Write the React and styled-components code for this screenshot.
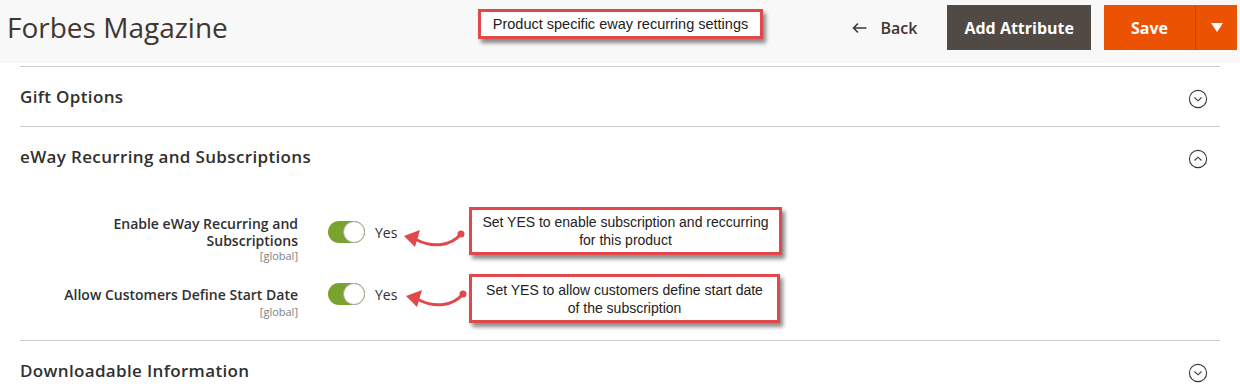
import React from 'react';
import styled, { createGlobalStyle } from 'styled-components';

const GlobalStyle = createGlobalStyle`
  html, body {
    margin: 0;
    padding: 0;
    background: #fff;
  }
  body {
    font-family: "Open Sans", "Liberation Sans", sans-serif;
    color: #303030;
    overflow: hidden;
  }
`;

const Page = styled.div`
  position: relative;
  width: 1240px;
  height: 389px;
  overflow: hidden;
`;

const Header = styled.header`
  display: flex;
  align-items: flex-start;
  height: 63px;
  background: #f8f8f8;
  padding: 5px 3px 0 7px;
  box-sizing: border-box;
`;

const Title = styled.h1`
  margin: 0;
  padding-top: 4px;
  font-size: 28px;
  font-weight: 400;
  color: #41362f;
  line-height: 36px;
  flex: 1;
`;

const Actions = styled.div`
  display: flex;
  align-items: center;
  height: 45px;
`;

const BackButton = styled.button`
  display: flex;
  align-items: center;
  gap: 14px;
  border: 0;
  background: none;
  font-family: inherit;
  font-size: 16px;
  font-weight: 600;
  color: #41362f;
  padding: 0;
  margin-right: 30px;
`;

const Button = styled.button`
  height: 45px;
  border: 0;
  font-family: inherit;
  font-size: 16px;
  font-weight: 700;
  color: #fff;
  background: ${p => p.$bg};
  padding: 0 17px;
`;

const SplitButton = styled.div`
  display: flex;
  margin-left: 13px;
  background: #eb5202;
  height: 45px;
`;

const SaveMain = styled(Button)`
  width: 92px;
  padding: 0;
  border-right: 1px solid #c74300;
`;

const SaveToggle = styled.button`
  width: 41px;
  border: 0;
  background: none;
  display: flex;
  align-items: center;
  justify-content: center;
  padding: 0;
`;

const Content = styled.div`
  padding: 3px 20px 0;
`;

const Section = styled.section`
  border-top: 1px solid #cccccc;
`;

const SectionHead = styled.div`
  display: flex;
  align-items: center;
  justify-content: space-between;
  height: 59px;
`;

const SectionTitle = styled.h2`
  margin: 0;
  font-size: 17px;
  font-weight: 600;
  color: #303030;
  letter-spacing: 0.35px;
`;

const Chevron = styled.svg`
  margin-right: 12px;
  margin-top: ${p => p.$mt || 0}px;
`;

const Fields = styled.div`
  padding: 29px 0 21px 38px;
  display: flex;
  flex-direction: column;
  gap: 20px;
`;

const Field = styled.div`
  display: grid;
  grid-template-columns: 240px auto;
  grid-template-areas:
    "label control"
    "scope .";
  column-gap: 30px;
  align-items: center;
`;

const Label = styled.div`
  grid-area: label;
  text-align: right;
  font-size: 14px;
  font-weight: 600;
  line-height: 17px;
  color: #303030;
`;

const Scope = styled.div`
  grid-area: scope;
  text-align: right;
  font-size: 11px;
  line-height: 14px;
  color: #808080;
`;

const Control = styled.div`
  grid-area: control;
  display: flex;
  align-items: center;
  gap: 10px;
  font-size: 14px;
  color: #303030;
`;

const Switch = styled.span`
  position: relative;
  display: inline-block;
  width: 37px;
  height: 22px;
  border-radius: 12px;
  background: #79a22e;
  &::after {
    content: '';
    position: absolute;
    right: 0;
    top: 0;
    width: 20px;
    height: 20px;
    border-radius: 50%;
    background: #fff;
    border: 1px solid #adadad;
  }
`;

const Callout = styled.div`
  position: absolute;
  left: ${p => p.$x}px;
  top: ${p => p.$y}px;
  width: ${p => p.$w}px;
  height: ${p => p.$h}px;
  box-sizing: border-box;
  border: 3px solid #e2474b;
  background: #fff;
  box-shadow: 3px 4px 4px rgba(0, 0, 0, 0.45);
  display: flex;
  align-items: center;
  justify-content: center;
  text-align: center;
  font-family: "Liberation Sans", "Noto Sans", sans-serif;
  font-size: ${p => p.$fs || 14}px;
  line-height: 18px;
  color: #222;
`;

const Pointer = styled.svg`
  position: absolute;
  left: ${p => p.$x}px;
  top: ${p => p.$y}px;
`;

const ChevronIcon = ({ up, mt }) => (
  <Chevron width="20" height="20" viewBox="0 0 20 20" $mt={mt}>
    <circle cx="10" cy="10" r="8.6" fill="none" stroke="#41362f" strokeWidth="1.1" />
    {up ? (
      <path d="M6.5 11.5 L10 8.2 L13.5 11.5" fill="none" stroke="#41362f" strokeWidth="1.1" />
    ) : (
      <path d="M6.5 8.5 L10 11.8 L13.5 8.5" fill="none" stroke="#41362f" strokeWidth="1.1" />
    )}
  </Chevron>
);

const CurvedArrow = ({ x, y }) => (
  <Pointer $x={x} $y={y} width="64" height="24" viewBox="0 0 64 24">
    <path d="M58 6 C48 18 30 20 14 12" fill="none" stroke="#e2474b" strokeWidth="3" strokeLinecap="round" />
    <circle cx="58" cy="6" r="3.5" fill="#e2474b" />
    <polygon points="1,8 17,2 12,19" fill="#e2474b" />
  </Pointer>
);

export default function App() {
  return (
    <Page>
      <GlobalStyle />
      <Header>
        <Title>Forbes Magazine</Title>
        <Actions>
          <BackButton>
            <svg width="15" height="12" viewBox="0 0 15 12">
              <path d="M14.5 6 H1.5 M6 1.5 L1.5 6 L6 10.5" fill="none" stroke="#41362f" strokeWidth="1.6" />
            </svg>
            Back
          </BackButton>
          <Button $bg="#514943">Add Attribute</Button>
          <SplitButton>
            <SaveMain $bg="transparent">Save</SaveMain>
            <SaveToggle aria-label="more">
              <svg width="12" height="9" viewBox="0 0 12 9">
                <polygon points="0,0 12,0 6,9" fill="#fff" />
              </svg>
            </SaveToggle>
          </SplitButton>
        </Actions>
      </Header>

      <Content>
        <Section>
          <SectionHead>
            <SectionTitle>Gift Options</SectionTitle>
            <ChevronIcon mt={4} />
          </SectionHead>
        </Section>
        <Section>
          <SectionHead>
            <SectionTitle>eWay Recurring and Subscriptions</SectionTitle>
            <ChevronIcon up mt={4} />
          </SectionHead>
          <Fields>
            <Field>
              <Label>Enable eWay Recurring and Subscriptions</Label>
              <Control>
                <Switch />
                Yes
              </Control>
              <Scope>[global]</Scope>
            </Field>
            <Field>
              <Label>Allow Customers Define Start Date</Label>
              <Control>
                <Switch />
                Yes
              </Control>
              <Scope>[global]</Scope>
            </Field>
          </Fields>
        </Section>
        <Section>
          <SectionHead>
            <SectionTitle>Downloadable Information</SectionTitle>
            <ChevronIcon mt={4} />
          </SectionHead>
        </Section>
      </Content>

      <Callout $x={478} $y={9} $w={285} $h={30} $fs={14.5}>Product specific eway recurring settings</Callout>
      <Callout $x={469} $y={207} $w={313} $h={48}>
        Set YES to enable subscription and reccurring<br />for this product
      </Callout>
      <Callout $x={469} $y={274} $w={311} $h={49}>
        Set YES to allow customers define start date<br />of the subscription
      </Callout>
      <CurvedArrow x={403} y={228} />
      <CurvedArrow x={405} y={288} />
    </Page>
  );
}
